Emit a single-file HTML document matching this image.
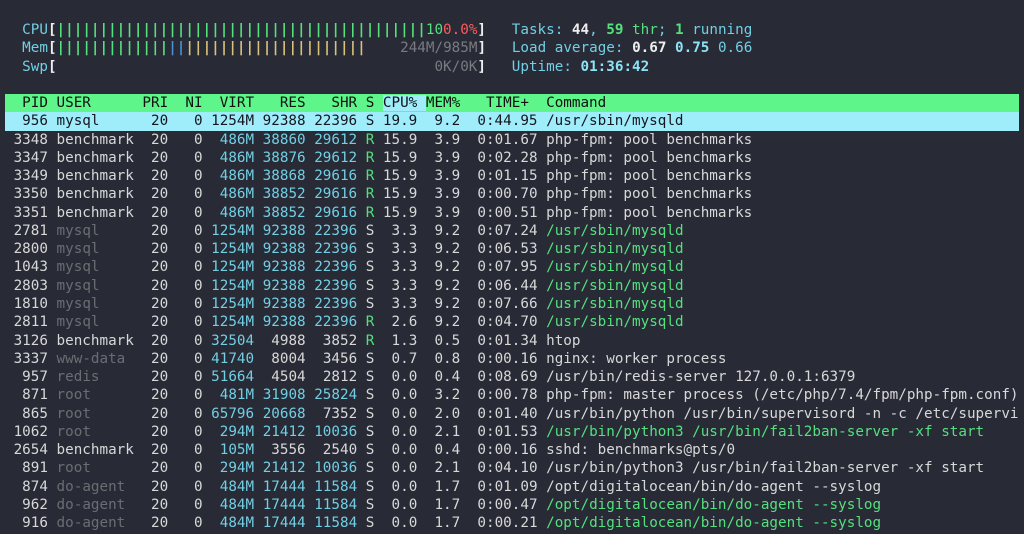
<!DOCTYPE html>
<html><head><meta charset="utf-8"><style>
html,body{margin:0;padding:0;background:#282a36;width:1024px;height:534px;overflow:hidden}
pre{margin:0;position:absolute;left:5px;top:21px;width:1014px;overflow:hidden;font-family:"DejaVu Sans Mono","Liberation Mono",monospace;font-size:14.27px;line-height:18.27px;color:#d8d8d8;white-space:pre}
.c{color:#72cfe3}.g{color:#55e07e}.d{color:#6c6d72}.r{color:#ff5a5a}.y{color:#d8c27a}.b{color:#4a90d9}.gr{color:#7a7b80}.wb{color:#eeeeee;font-weight:bold}.cb{color:#8be3f5;font-weight:bold}.gb{color:#55e07e;font-weight:bold}
.hdr{display:block;background:#5ef58a;color:#111}
.hdr .s{background:#9fecfb}
.sel{display:block;background:#9fecfb;color:#15171f}
.bar{font-weight:bold}
</style></head><body><pre><span class="c">  CPU</span><span class="wb">[</span><span class="g bar">|||||||||||||||||||||||||||||||||||||||||||</span><span class="g">10</span><span class="r">0.0%</span><span class="wb">]</span>   <span class="c">Tasks: </span><span class="wb">44</span><span class="c">, </span><span class="gb">59</span><span class="g"> thr</span><span class="c">; </span><span class="gb">1</span><span class="c"> running</span>
<span class="c">  Mem</span><span class="wb">[</span><span class="g bar">|||||||||||||</span><span class="b bar">||</span><span class="y bar">|||||||||||||||||||||</span>    <span class="gr">244M/985M</span><span class="wb">]</span>   <span class="c">Load average: </span><span class="wb">0.67 </span><span class="cb">0.75 </span><span class="c">0.66</span>
<span class="c">  Swp</span><span class="wb">[</span>                                            <span class="gr">0K/0K</span><span class="wb">]</span>   <span class="c">Uptime: </span><span class="cb">01:36:42</span>

<span class="hdr">  PID USER      PRI  NI  VIRT   RES   SHR S <span class="s">CPU% </span>MEM%   TIME+  Command                                                                       </span><span class="sel">  956 mysql      20   0 1254M 92388 22396 S 19.9  9.2  0:44.95 /usr/sbin/mysqld                                                                  </span> 3348 benchmark  20   0 <span class="c"> 486M 38860 29612</span> <span class="g">R</span> 15.9  3.9  0:01.67 php-fpm: pool benchmarks
 3347 benchmark  20   0 <span class="c"> 486M 38876 29612</span> <span class="g">R</span> 15.9  3.9  0:02.28 php-fpm: pool benchmarks
 3349 benchmark  20   0 <span class="c"> 486M 38868 29616</span> <span class="g">R</span> 15.9  3.9  0:01.15 php-fpm: pool benchmarks
 3350 benchmark  20   0 <span class="c"> 486M 38852 29616</span> <span class="g">R</span> 15.9  3.9  0:00.70 php-fpm: pool benchmarks
 3351 benchmark  20   0 <span class="c"> 486M 38852 29616</span> <span class="g">R</span> 15.9  3.9  0:00.51 php-fpm: pool benchmarks
 2781 <span class="d">mysql</span>      20   0 <span class="c">1254M 92388 22396</span> S  3.3  9.2  0:07.24 <span class="g">/usr/sbin/mysqld</span>
 2800 <span class="d">mysql</span>      20   0 <span class="c">1254M 92388 22396</span> S  3.3  9.2  0:06.53 <span class="g">/usr/sbin/mysqld</span>
 1043 <span class="d">mysql</span>      20   0 <span class="c">1254M 92388 22396</span> S  3.3  9.2  0:07.95 <span class="g">/usr/sbin/mysqld</span>
 2803 <span class="d">mysql</span>      20   0 <span class="c">1254M 92388 22396</span> S  3.3  9.2  0:06.44 <span class="g">/usr/sbin/mysqld</span>
 1810 <span class="d">mysql</span>      20   0 <span class="c">1254M 92388 22396</span> S  3.3  9.2  0:07.66 <span class="g">/usr/sbin/mysqld</span>
 2811 <span class="d">mysql</span>      20   0 <span class="c">1254M 92388 22396</span> <span class="g">R</span>  2.6  9.2  0:04.70 <span class="g">/usr/sbin/mysqld</span>
 3126 benchmark  20   0 <span class="c">32504</span>  4988  3852 <span class="g">R</span>  1.3  0.5  0:01.34 htop
 3337 <span class="d">www-data</span>   20   0 <span class="c">41740</span>  8004  3456 S  0.7  0.8  0:00.16 nginx: worker process
  957 <span class="d">redis</span>      20   0 <span class="c">51664</span>  4504  2812 S  0.0  0.4  0:08.69 /usr/bin/redis-server 127.0.0.1:6379
  871 <span class="d">root</span>       20   0 <span class="c"> 481M 31908 25824</span> S  0.0  3.2  0:00.78 php-fpm: master process (/etc/php/7.4/fpm/php-fpm.conf)
  865 <span class="d">root</span>       20   0 <span class="c">65796 20668</span>  7352 S  0.0  2.0  0:01.40 /usr/bin/python /usr/bin/supervisord -n -c /etc/supervisor/supervisord.conf
 1062 <span class="d">root</span>       20   0 <span class="c"> 294M 21412 10036</span> S  0.0  2.1  0:01.53 <span class="g">/usr/bin/python3 /usr/bin/fail2ban-server -xf start</span>
 2654 benchmark  20   0 <span class="c"> 105M</span>  3556  2540 S  0.0  0.4  0:00.16 sshd: benchmarks@pts/0
  891 <span class="d">root</span>       20   0 <span class="c"> 294M 21412 10036</span> S  0.0  2.1  0:04.10 /usr/bin/python3 /usr/bin/fail2ban-server -xf start
  874 <span class="d">do-agent</span>   20   0 <span class="c"> 484M 17444 11584</span> S  0.0  1.7  0:01.09 /opt/digitalocean/bin/do-agent --syslog
  962 <span class="d">do-agent</span>   20   0 <span class="c"> 484M 17444 11584</span> S  0.0  1.7  0:00.47 <span class="g">/opt/digitalocean/bin/do-agent --syslog</span>
  916 <span class="d">do-agent</span>   20   0 <span class="c"> 484M 17444 11584</span> S  0.0  1.7  0:00.21 <span class="g">/opt/digitalocean/bin/do-agent --syslog</span>
</pre></body></html>
